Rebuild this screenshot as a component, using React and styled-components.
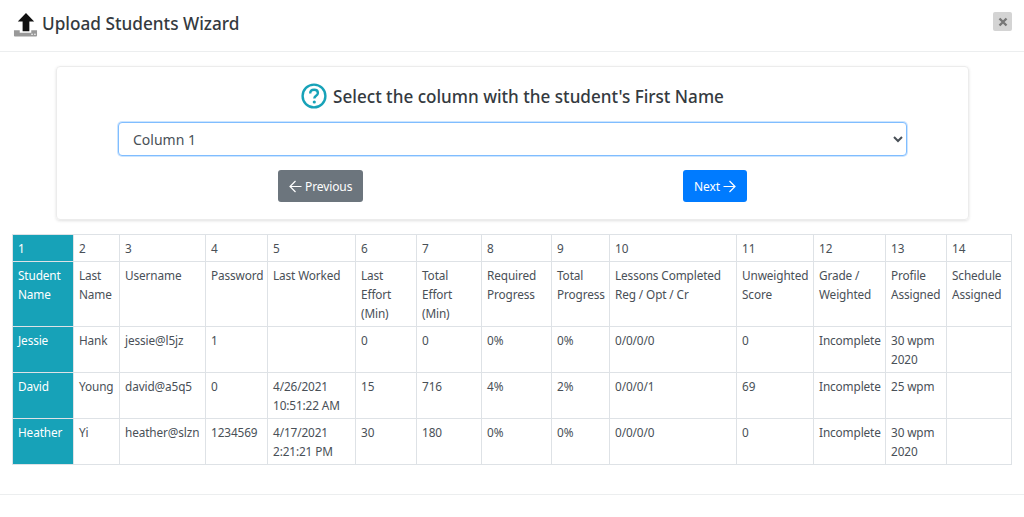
import React from "react";
import styled, { createGlobalStyle } from "styled-components";

const COLUMN_WIDTHS = [61, 46, 86, 62, 88, 61, 65, 70, 58, 127, 77, 72, 61, 65];

const HEADERS = [
  "Student Name",
  "Last Name",
  "Username",
  "Password",
  "Last Worked",
  "Last Effort (Min)",
  "Total Effort (Min)",
  "Required Progress",
  "Total Progress",
  "Lessons Completed Reg / Opt / Cr",
  "Unweighted Score",
  "Grade / Weighted",
  "Profile Assigned",
  "Schedule Assigned",
];

const STUDENTS = [
  ["Jessie", "Hank", "jessie@l5jz", "1", "", "0", "0", "0%", "0%", "0/0/0/0", "0", "Incomplete", "30 wpm 2020", ""],
  ["David", "Young", "david@a5q5", "0", "4/26/2021 10:51:22 AM", "15", "716", "4%", "2%", "0/0/0/1", "69", "Incomplete", "25 wpm", ""],
  ["Heather", "Yi", "heather@slzn", "1234569", "4/17/2021 2:21:21 PM", "30", "180", "0%", "0%", "0/0/0/0", "0", "Incomplete", "30 wpm 2020", ""],
];

export default function App() {
  return (
    <>
      <GlobalStyle />
      <Page>
        <Header>
          <Title>
            <UploadIcon />
            Upload Students Wizard
          </Title>
          <CloseButton aria-label="Close">
            <svg width="10" height="10" viewBox="0 0 10 10">
              <path d="M1.5 1.5l7 7M8.5 1.5l-7 7" stroke="#777" strokeWidth="2.4" />
            </svg>
          </CloseButton>
        </Header>
        <Body>
          <Card>
            <Question>
              <HelpIcon />
              Select the column with the student's First Name
            </Question>
            <Select defaultValue="1">
              {COLUMN_WIDTHS.map((_, i) => (
                <option key={i} value={i + 1}>
                  Column {i + 1}
                </option>
              ))}
            </Select>
            <Buttons>
              <Button $variant="secondary">
                <Arrow $left />
                Previous
              </Button>
              <Button $variant="primary">
                Next
                <Arrow />
              </Button>
            </Buttons>
          </Card>
          <Table>
            <colgroup>
              {COLUMN_WIDTHS.map((w, i) => (
                <col key={i} style={{ width: w }} />
              ))}
            </colgroup>
            <tbody>
              <tr>
                {COLUMN_WIDTHS.map((_, i) => (
                  <Cell key={i} $selected={i === 0}>
                    {i + 1}
                  </Cell>
                ))}
              </tr>
              <tr>
                {HEADERS.map((h, i) => (
                  <Cell key={i} $selected={i === 0}>
                    {h}
                  </Cell>
                ))}
              </tr>
              {STUDENTS.map((row) => (
                <tr key={row[2]}>
                  {row.map((v, i) => (
                    <Cell key={i} $selected={i === 0}>
                      {v}
                    </Cell>
                  ))}
                </tr>
              ))}
            </tbody>
          </Table>
        </Body>
        <Footer />
      </Page>
    </>
  );
}

function UploadIcon() {
  return (
    <svg width="25" height="25" viewBox="0 0 26 26">
      <path d="M1 19h6v2.5h12V19h6v5.5a1 1 0 0 1-1 1H2a1 1 0 0 1-1-1z" fill="#999" />
      <path d="M13.5 1L22 10h-5v10h-7V10H5z" fill="#111" />
      <rect x="19" y="22.5" width="1.6" height="1.4" fill="#eee" />
      <rect x="22" y="22.5" width="1.6" height="1.4" fill="#eee" />
    </svg>
  );
}

function HelpIcon() {
  return (
    <svg width="26" height="26" viewBox="0 0 26 26">
      <circle cx="13" cy="13" r="11.4" fill="none" stroke="#17a2b8" strokeWidth="2.4" />
      <path
        d="M9.2 10.4c0-2.3 1.7-3.6 3.9-3.6 2.2 0 3.8 1.3 3.8 3.2 0 2.8-3.6 2.8-3.6 5.4"
        fill="none"
        stroke="#17a2b8"
        strokeWidth="2.4"
      />
      <circle cx="13.3" cy="19" r="1.6" fill="#17a2b8" />
    </svg>
  );
}

function Arrow({ $left }) {
  return (
    <svg width="13" height="13" viewBox="0 0 13 13">
      <path
        d={$left ? "M12.5 6.5H1M6.5 1L1 6.5 6.5 12" : "M.5 6.5H12M6.5 1L12 6.5 6.5 12"}
        fill="none"
        stroke="currentColor"
        strokeWidth="1.2"
      />
    </svg>
  );
}

const GlobalStyle = createGlobalStyle`
  body {
    margin: 0;
    background: #fff;
    color: #212529;
    font-family: "Noto Sans", "Open Sans", sans-serif;
  }
`;
const Page = styled.div`
  display: flex;
  flex-direction: column;
  width: 1024px;
  height: 517px;
  overflow: hidden;
`;
const Header = styled.div`
  display: flex;
  align-items: flex-start;
  justify-content: space-between;
  height: 52px;
  box-sizing: border-box;
  padding: 11px 12px 0 13px;
  border-bottom: 1px solid #eceeef;
`;
const Title = styled.h5`
  display: flex;
  align-items: center;
  gap: 4px;
  margin: 0;
  font-size: 17.2px;
  font-weight: 500;
  line-height: 26px;
  color: #343a40;
`;
const CloseButton = styled.button`
  display: flex;
  align-items: center;
  justify-content: center;
  width: 19px;
  height: 19px;
  margin-top: 1px;
  padding: 0;
  border: none;
  border-radius: 2px;
  background: #d4d4d4;
`;
const Body = styled.div`
  display: flex;
  flex-direction: column;
  padding: 14px 12px 0;
`;
const Card = styled.div`
  display: flex;
  flex-direction: column;
  align-items: center;
  box-sizing: border-box;
  width: 913px;
  height: 154px;
  margin: 0 0 14px 44px;
  padding-top: 16px;
  border: 1px solid #ececec;
  border-radius: 4px;
  box-shadow: 0 1px 3px rgba(0, 0, 0, 0.12);
`;
const Question = styled.div`
  display: flex;
  align-items: center;
  gap: 6px;
  height: 26px;
  font-size: 17.1px;
  font-weight: 500;
  color: #343a40;
`;
const Select = styled.select`
  width: 789px;
  height: 34px;
  margin-top: 13px;
  padding: 0 10px;
  border: 1px solid #80bdff;
  border-radius: 4px;
  outline: none;
  background: #fff;
  box-shadow: 0 0 0 1px rgba(0, 123, 255, 0.2);
  color: #495057;
  font-family: inherit;
  font-size: 14px;
`;
const Buttons = styled.div`
  display: flex;
  justify-content: space-between;
  width: 469px;
  margin-top: 14px;
`;
const Button = styled.button`
  display: flex;
  align-items: center;
  gap: 3px;
  height: 32px;
  padding: 0 11px;
  border: none;
  border-radius: 3px;
  background: ${(p) => (p.$variant === "primary" ? "#007bff" : "#6c757d")};
  color: #fff;
  font-family: inherit;
  font-size: 12px;
  letter-spacing: -0.1px;
`;
const Table = styled.table`
  width: 999px;
  table-layout: fixed;
  border-collapse: collapse;
  font-size: 11.8px;
  letter-spacing: -0.12px;
  line-height: 19px;
  color: #495057;
`;
const Cell = styled.td`
  padding: 4px 5px 3px;
  border: 1px solid #dee2e6;
  vertical-align: top;
  overflow: hidden;
  background: ${(p) => (p.$selected ? "#17a2b8" : "#fff")};
  color: ${(p) => (p.$selected ? "#fff" : "inherit")};
`;
const Footer = styled.div`
  margin-top: 29px;
  border-top: 1px solid #eceeef;
`;
